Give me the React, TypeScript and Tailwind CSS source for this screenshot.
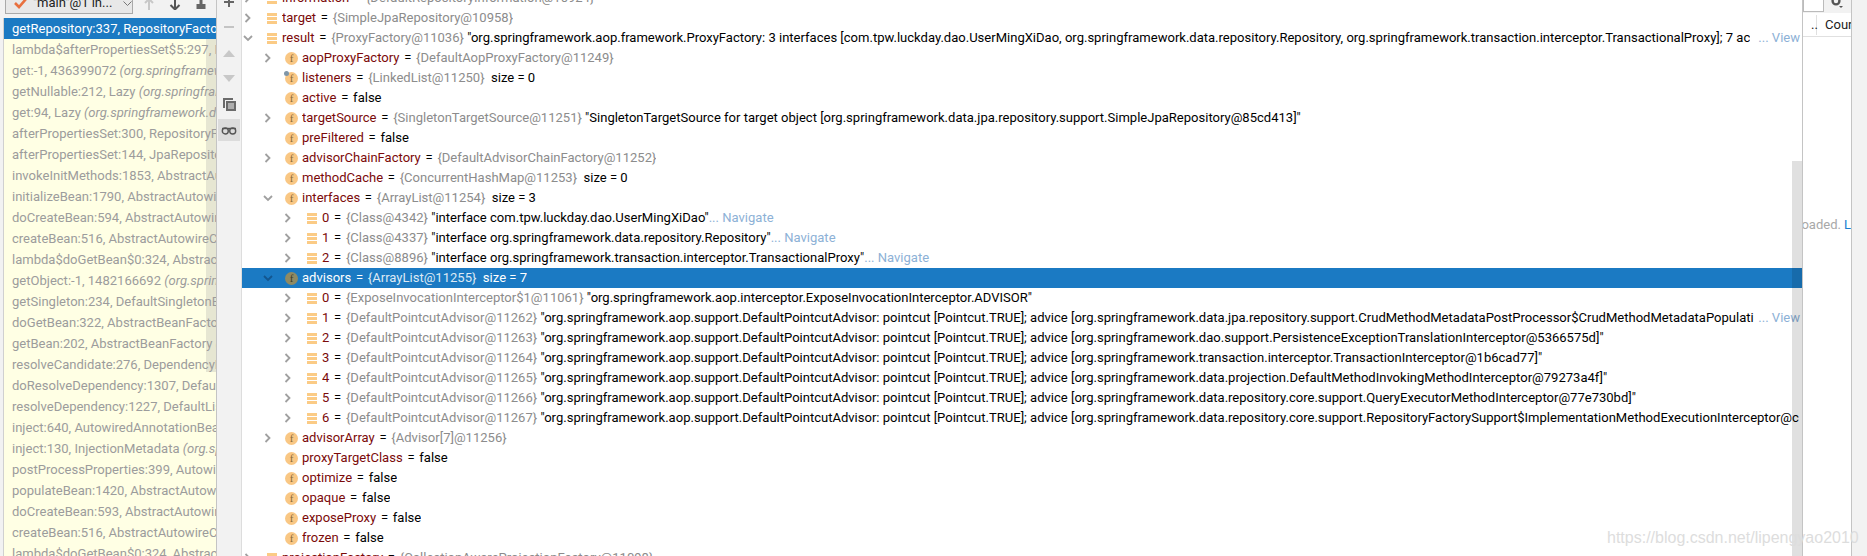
const FONT = "font-['Roboto','Noto_Sans',sans-serif]";

type Frame = { method: string; cls?: string; pkg?: string };

const frames: Frame[] = [
  { method: 'getRepository:337,', cls: 'RepositoryFactorySupport' },
  { method: 'lambda$afterPropertiesSet$5:297,', cls: 'RepositoryFactoryBeanSupport' },
  { method: 'get:-1, 436399072', pkg: '(org.springframework.data)' },
  { method: 'getNullable:212,', cls: 'Lazy', pkg: '(org.springframework.data)' },
  { method: 'get:94,', cls: 'Lazy', pkg: '(org.springframework.data.util)' },
  { method: 'afterPropertiesSet:300,', cls: 'RepositoryFactoryBeanSupport' },
  { method: 'afterPropertiesSet:144,', cls: 'JpaRepositoryFactoryBean' },
  { method: 'invokeInitMethods:1853,', cls: 'AbstractAutowireCapableBeanFactory' },
  { method: 'initializeBean:1790,', cls: 'AbstractAutowireCapableBeanFactory' },
  { method: 'doCreateBean:594,', cls: 'AbstractAutowireCapableBeanFactory' },
  { method: 'createBean:516,', cls: 'AbstractAutowireCapableBeanFactory' },
  { method: 'lambda$doGetBean$0:324,', cls: 'AbstractBeanFactory' },
  { method: 'getObject:-1, 1482166692', pkg: '(org.springframework.beans)' },
  { method: 'getSingleton:234,', cls: 'DefaultSingletonBeanRegistry' },
  { method: 'doGetBean:322,', cls: 'AbstractBeanFactory' },
  { method: 'getBean:202,', cls: 'AbstractBeanFactory', pkg: '(org.springframework)' },
  { method: 'resolveCandidate:276,', cls: 'DependencyDescriptor' },
  { method: 'doResolveDependency:1307,', cls: 'DefaultListableBeanFactory' },
  { method: 'resolveDependency:1227,', cls: 'DefaultListableBeanFactory' },
  { method: 'inject:640,', cls: 'AutowiredAnnotationBeanPostProcessor' },
  { method: 'inject:130,', cls: 'InjectionMetadata', pkg: '(org.springframework)' },
  { method: 'postProcessProperties:399,', cls: 'AutowiredAnnotationBeanPostProcessor' },
  { method: 'populateBean:1420,', cls: 'AbstractAutowireCapableBeanFactory' },
  { method: 'doCreateBean:593,', cls: 'AbstractAutowireCapableBeanFactory' },
  { method: 'createBean:516,', cls: 'AbstractAutowireCapableBeanFactory' },
  { method: 'lambda$doGetBean$0:324,', cls: 'AbstractBeanFactory' },
];

function Chevron({ open, dark }: { open?: boolean; dark?: boolean }) {
  return (
    <svg width="10" height="10" viewBox="0 0 10 10" className="shrink-0">
      <path
        d={open ? 'M1 3l4 4 4-4' : 'M2.5 1l4 4-4 4'}
        fill="none"
        stroke={dark ? '#13568f' : '#a0a0a0'}
        strokeWidth="1.8"
      />
    </svg>
  );
}

function FieldIcon({ selected }: { selected?: boolean }) {
  return (
    <span
      className={`-ml-[2px] flex h-[13px] w-[13px] shrink-0 items-center justify-center rounded-full font-['Liberation_Serif',serif] text-[11px] leading-none ${
        selected ? 'bg-[#8f8a63] text-[#3a3a26]' : 'bg-[#f9c784] text-[#8a6a35]'
      }`}
    >
      f
    </span>
  );
}

function ArrayIcon() {
  return (
    <svg width="10" height="11" viewBox="0 0 10 11" className="shrink-0">
      <path d="M0 0h10v3H0zM0 4h10v3H0zM0 8h10v3H0z" fill="#fbcb85" />
    </svg>
  );
}

type RowProps = {
  depth: 0 | 1 | 2;
  chevron?: 'open' | 'closed';
  icon: 'field' | 'array';
  name: string;
  type?: string;
  value?: string;
  link?: 'View' | 'Navigate';
  selected?: boolean;
  badge?: boolean;
};

function Row({ depth, chevron, icon, name, type, value, link, selected, badge }: RowProps) {
  const indent = ['pl-[1px]', 'pl-[21px]', 'pl-[41px]'][depth];
  return (
    <div
      className={`flex h-5 items-center whitespace-pre ${indent} ${
        selected ? 'bg-[#1b7ac3] text-white' : 'text-black'
      }`}
    >
      <span className="flex w-[24px] shrink-0 items-center">
        {chevron && <Chevron open={chevron === 'open'} dark={selected} />}
      </span>
      <span className="relative flex w-[15px] shrink-0 items-center">
        {icon === 'field' ? <FieldIcon selected={selected} /> : <ArrayIcon />}
        {badge && (
          <span className="absolute -left-[3px] -top-[1px] h-[5px] w-[5px] rounded-full bg-[#7f96a8]" />
        )}
      </span>
      <span className="min-w-0 overflow-hidden">
        <span className={selected ? 'text-white' : 'text-[#7b0a0a]'}>{name}</span>
        <span className="px-[1.5px]"> = </span>
        {type && <span className={selected ? 'text-[#dce9f5]' : 'text-[#8c8c8c]'}>{type}</span>}
        {value && <span>{type ? ' ' : ''}{value}</span>}
      </span>
      {link && (
        <span className={`shrink-0 pr-[2px] text-[#8db1d6] ${link === 'View' ? 'ml-auto' : ''}`}>... {link}</span>
      )}
    </div>
  );
}

const pointcut = '"org.springframework.aop.support.DefaultPointcutAdvisor: pointcut [Pointcut.TRUE]; advice ';

export default function App() {
  return (
    <div className={`relative flex h-[556px] w-[1867px] overflow-hidden bg-[#f2f2f2] text-[13.04px] ${FONT}`}>
      {/* Frames */}
      <div className="flex w-[217px] shrink-0 flex-col overflow-hidden border-r border-[#c4c4c4] pl-[3px]">
        <div className="flex h-[18px] shrink-0 items-start overflow-hidden pl-[2px]">
          <div className="-mt-[8px] flex h-[22px] w-[128px] shrink-0 items-center border border-[#aaaaaa] bg-[#e8e8e8] pl-[8px] text-[#222222]">
            <svg width="13" height="11" viewBox="0 0 13 11" className="shrink-0">
              <path d="M1 5l4 4 7-8" fill="none" stroke="#e8703f" strokeWidth="2.6" />
            </svg>
            <span className="ml-[6px] whitespace-nowrap">"main"@1 in...</span>
            <svg width="9" height="6" viewBox="0 0 9 6" className="ml-[11px] mt-[2px] shrink-0">
              <path d="M0.5 0.5l4 4 4-4" fill="none" stroke="#777777" />
            </svg>
          </div>
          <svg width="12" height="10" viewBox="0 0 12 10" className="ml-[10px] shrink-0">
            <path d="M6 0v10M2 3l4-4 4 4" fill="none" stroke="#c8c8c8" strokeWidth="2" />
          </svg>
          <svg width="12" height="10" viewBox="0 0 12 10" className="ml-[14px] shrink-0">
            <path d="M6 -2v11M1.5 5l4.5 4.5L10.5 5" fill="none" stroke="#555555" strokeWidth="2" />
          </svg>
          <svg width="10" height="9" viewBox="0 0 10 9" className="ml-[15px] shrink-0">
            <path d="M3.5 0h3v4h3v5h-9v-5h3z" fill="#666666" />
          </svg>
        </div>
        <div className="relative min-h-0 flex-1 border-l border-[#d0d0d0] bg-[#ffffe4] text-[#9c9c9c]">
          <div className="absolute right-0 top-[21px] h-[333px] w-[10px] bg-[#e6e6d2]" />
          {frames.map((f, i) => (
            <div
              key={i}
              className={`relative flex h-[21px] items-center overflow-hidden whitespace-pre pl-[8px] ${
                i === 0 ? 'bg-[#1b7ac3] text-white' : ''
              }`}
            >
              {f.method}
              {f.cls && ` ${f.cls}`}
              {f.pkg && <span className="italic"> {f.pkg}</span>}
            </div>
          ))}
        </div>
      </div>

      {/* Side toolbar */}
      <div className="flex w-[24px] shrink-0 flex-col items-center">
        <svg width="12" height="8" viewBox="0 0 12 8" className="shrink-0">
          <path d="M6 -4v11M1 2h10" stroke="#666666" strokeWidth="2" />
        </svg>
        <span className="mt-[18px] h-[2px] w-[10px] bg-[#c4c4c4]" />
        <svg width="12" height="7" viewBox="0 0 12 7" className="mt-[22px]">
          <path d="M6 0l6 7H0z" fill="#c8c8c8" />
        </svg>
        <svg width="12" height="7" viewBox="0 0 12 7" className="mt-[18px]">
          <path d="M6 7L0 0h12z" fill="#c8c8c8" />
        </svg>
        <svg width="13" height="13" viewBox="0 0 13 13" className="mt-[16px]">
          <path d="M0 0h10v2H2v8H0zM3 3h10v10H3z" fill="#6b6b6b" />
          <path d="M5 6h6M5 8h6M5 10h6" stroke="#f2f2f2" />
        </svg>
        <div className="mt-[8px] flex h-[22px] w-[22px] items-center justify-center bg-[#dcdcdc]">
          <svg width="16" height="9" viewBox="0 0 16 9">
            <path d="M1 2.5h14" stroke="#555555" strokeWidth="1.4" />
            <circle cx="4.3" cy="5" r="3" fill="none" stroke="#555555" strokeWidth="1.4" />
            <circle cx="11.7" cy="5" r="3" fill="none" stroke="#555555" strokeWidth="1.4" />
          </svg>
        </div>
      </div>

      {/* Variables */}
      <div className="relative w-[1561px] shrink-0 overflow-hidden border-l border-[#dddddd] bg-white">
        <div className="-mt-[12px]">
          <Row depth={0} chevron="closed" icon="array" name="information" type="{DefaultRepositoryInformation@10924}" />
          <Row depth={0} chevron="closed" icon="array" name="target" type="{SimpleJpaRepository@10958}" />
          <Row
            depth={0}
            chevron="open"
            icon="array"
            name="result"
            type="{ProxyFactory@11036}"
            value='"org.springframework.aop.framework.ProxyFactory: 3 interfaces [com.tpw.luckday.dao.UserMingXiDao, org.springframework.data.repository.Repository, org.springframework.transaction.interceptor.TransactionalProxy]; 7 ac'
            link="View"
          />
          <Row depth={1} chevron="closed" icon="field" name="aopProxyFactory" type="{DefaultAopProxyFactory@11249}" />
          <Row depth={1} icon="field" badge name="listeners" type="{LinkedList@11250}" value=" size = 0" />
          <Row depth={1} icon="field" name="active" value="false" />
          <Row depth={1} chevron="closed" icon="field" name="targetSource" type="{SingletonTargetSource@11251}" value='"SingletonTargetSource for target object [org.springframework.data.jpa.repository.support.SimpleJpaRepository@85cd413]"' />
          <Row depth={1} icon="field" name="preFiltered" value="false" />
          <Row depth={1} chevron="closed" icon="field" name="advisorChainFactory" type="{DefaultAdvisorChainFactory@11252}" />
          <Row depth={1} icon="field" name="methodCache" type="{ConcurrentHashMap@11253}" value=" size = 0" />
          <Row depth={1} chevron="open" icon="field" name="interfaces" type="{ArrayList@11254}" value=" size = 3" />
          <Row depth={2} chevron="closed" icon="array" name="0" type="{Class@4342}" value='"interface com.tpw.luckday.dao.UserMingXiDao"' link="Navigate" />
          <Row depth={2} chevron="closed" icon="array" name="1" type="{Class@4337}" value='"interface org.springframework.data.repository.Repository"' link="Navigate" />
          <Row depth={2} chevron="closed" icon="array" name="2" type="{Class@8896}" value='"interface org.springframework.transaction.interceptor.TransactionalProxy"' link="Navigate" />
          <Row depth={1} chevron="open" icon="field" selected name="advisors" type="{ArrayList@11255}" value=" size = 7" />
          <Row depth={2} chevron="closed" icon="array" name="0" type="{ExposeInvocationInterceptor$1@11061}" value='"org.springframework.aop.interceptor.ExposeInvocationInterceptor.ADVISOR"' />
          <Row depth={2} chevron="closed" icon="array" name="1" type="{DefaultPointcutAdvisor@11262}" value={`${pointcut}[org.springframework.data.jpa.repository.support.CrudMethodMetadataPostProcessor$CrudMethodMetadataPopulati`} link="View" />
          <Row depth={2} chevron="closed" icon="array" name="2" type="{DefaultPointcutAdvisor@11263}" value={`${pointcut}[org.springframework.dao.support.PersistenceExceptionTranslationInterceptor@5366575d]"`} />
          <Row depth={2} chevron="closed" icon="array" name="3" type="{DefaultPointcutAdvisor@11264}" value={`${pointcut}[org.springframework.transaction.interceptor.TransactionInterceptor@1b6cad77]"`} />
          <Row depth={2} chevron="closed" icon="array" name="4" type="{DefaultPointcutAdvisor@11265}" value={`${pointcut}[org.springframework.data.projection.DefaultMethodInvokingMethodInterceptor@79273a4f]"`} />
          <Row depth={2} chevron="closed" icon="array" name="5" type="{DefaultPointcutAdvisor@11266}" value={`${pointcut}[org.springframework.data.repository.core.support.QueryExecutorMethodInterceptor@77e730bd]"`} />
          <Row depth={2} chevron="closed" icon="array" name="6" type="{DefaultPointcutAdvisor@11267}" value={`${pointcut}[org.springframework.data.repository.core.support.RepositoryFactorySupport$ImplementationMethodExecutionInterceptor@c`} />
          <Row depth={1} chevron="closed" icon="field" name="advisorArray" type="{Advisor[7]@11256}" />
          <Row depth={1} icon="field" name="proxyTargetClass" value="false" />
          <Row depth={1} icon="field" name="optimize" value="false" />
          <Row depth={1} icon="field" name="opaque" value="false" />
          <Row depth={1} icon="field" name="exposeProxy" value="false" />
          <Row depth={1} icon="field" name="frozen" value="false" />
          <Row depth={0} chevron="closed" icon="array" name="projectionFactory" type="{CollectionAwareProjectionFactory@11098}" />
        </div>
        <div className="absolute bottom-0 right-0 top-[161px] w-[10px] bg-black/[0.12]" />
      </div>

      {/* Right-hand strip */}
      <div className="flex w-[50px] shrink-0 flex-col overflow-hidden border-x border-[#c4c4c4] bg-white">
        <div className="flex h-[13px] shrink-0 items-start bg-[#f2f2f2]">
          <span className="h-[12px] w-[21px] border border-t-0 border-[#bbbbbb] bg-white" />
          <svg width="12" height="8" viewBox="0 0 12 8" className="ml-[7px]">
            <circle cx="5" cy="1" r="3.4" fill="none" stroke="#555555" strokeWidth="2.4" />
            <path d="M8 6h4l-2 2z" fill="#555555" />
          </svg>
        </div>
        <div className="flex h-[24px] shrink-0 items-center border-b border-[#e0e0e0] whitespace-nowrap text-[#222222]">
          <span className="w-[14px] border-r border-[#e0e0e0] pl-[8px] leading-[20px]">..</span>
          <span className="ml-[8px]">Courier</span>
        </div>
        <div className="mt-[178px] flex justify-end whitespace-nowrap text-[#a8a8a8]">
          loaded. <span className="ml-[3px] text-[#1a7fd0]">L</span>
        </div>
      </div>

      {/* Watermark lying over the panels */}
      <div className="absolute left-[1607px] top-[527px] whitespace-nowrap font-['Liberation_Sans',sans-serif] text-[16px] leading-[22px] text-[#dddddd]">
        https://blog.csdn.net/lipengyao2010
      </div>
    </div>
  );
}
